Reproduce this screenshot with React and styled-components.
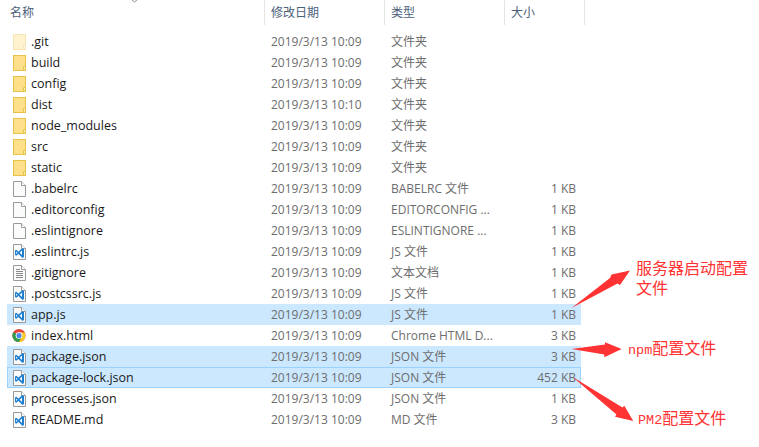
import styled, { createGlobalStyle } from "styled-components";

const GlobalStyle = createGlobalStyle`
  html, body { margin: 0; padding: 0; background: #fff; }
  body { font-family: "Open Sans", "Noto Sans CJK SC", sans-serif; font-size: 12px; }
`;

const Page = styled.div`
  position: relative;
  width: 759px;
  height: 447px;
  overflow: hidden;
  background: #fff;
`;

const Header = styled.div`
  position: relative;
  display: grid;
  grid-template-columns: 265px 120px 120px 80px;
  height: 25px;
  margin-bottom: 6px;
`;

const HeaderCell = styled.div`
  padding-left: ${(p) => p.$pad}px;
  height: 25px;
  line-height: 23px;
  color: #4c607a;
  font-size: 12px;
  font-family: "Noto Sans CJK SC", sans-serif;
  border-right: 1px solid #e5e5e5;
  box-sizing: border-box;
`;

const SortCaret = styled.svg`
  position: absolute;
  left: 130px;
  top: -1px;
`;

const List = styled.div`
  margin-left: 7px;
  width: 574px;
`;

const Row = styled.div`
  display: grid;
  grid-template-columns: 257px 120px 120px 77px;
  height: 21px;
  box-sizing: border-box;
  line-height: 21px;
  background: ${(p) => (p.$selected ? "#cce8ff" : "transparent")};
  box-shadow: ${(p) => (p.$focused ? "inset 0 0 0 1px #99d1ff" : "none")};
`;

const NameCell = styled.div`
  display: flex;
  align-items: center;
  gap: 5px;
  padding-left: 6px;
  color: #1a1a1a;
  font-size: 12.5px;
`;

const IconSlot = styled.span`
  display: flex;
  width: 13px;
  height: 16px;
  align-items: center;
  justify-content: center;
  flex: none;
`;

const MetaCell = styled.div`
  color: #6d6d6d;
  padding-left: 7px;
  font-size: 12px;
  white-space: nowrap;
  font-family: "Open Sans", "Noto Sans CJK SC", sans-serif;
`;

const SizeCell = styled(MetaCell)`
  text-align: right;
  padding: 0 5px 0 0;
`;

const ArrowLayer = styled.svg`
  position: absolute;
  left: 0;
  top: 0;
  pointer-events: none;
`;

const Note = styled.div`
  position: absolute;
  left: ${(p) => p.$x}px;
  top: ${(p) => p.$y}px;
  width: ${(p) => p.$w || 130}px;
  color: #ff3333;
  font-size: 16px;
  line-height: 20px;
  font-family: "Noto Sans CJK SC", sans-serif;
`;

const Latin = styled.span`
  font-family: "Liberation Mono", monospace;
  font-size: 13.5px;
`;

function FolderIcon({ faded }) {
  return (
    <svg width="13" height="16" viewBox="0 0 13 16" opacity={faded ? 0.4 : 1}>
      <rect x="0.5" y="0.5" width="12" height="15" fill="#ffe08a" stroke="#e9c349" />
      <path d="M10.5 15.5V11.5H12.5" fill="#fff3c4" stroke="#e9c349" />
    </svg>
  );
}

function PlainIcon() {
  return (
    <svg width="13" height="16" viewBox="0 0 13 16">
      <path d="M.5.5H8.5L12.5 4.5V15.5H.5Z" fill="#fbfbfb" stroke="#9a9a9a" />
      <path d="M8.5.5V4.5H12.5" fill="#fff" stroke="#9a9a9a" />
    </svg>
  );
}

function TextIcon() {
  return (
    <svg width="13" height="16" viewBox="0 0 13 16">
      <path d="M.5.5H8.5L12.5 4.5V15.5H.5Z" fill="#fbfbfb" stroke="#9a9a9a" />
      <path d="M8.5.5V4.5H12.5" fill="#fff" stroke="#9a9a9a" />
      <path d="M3 4.5H7M3 6.5H10M3 8.5H10M3 10.5H10M3 12.5H10" stroke="#8a8a8a" />
    </svg>
  );
}

function CodeIcon() {
  return (
    <svg width="13" height="16" viewBox="0 0 13 16">
      <path d="M.5.5H8.5L12.5 4.5V15.5H.5Z" fill="#fbfbfb" stroke="#9a9a9a" />
      <path d="M8.5.5V4.5H12.5" fill="#fff" stroke="#9a9a9a" />
      <path d="M9.5 4L5.5 7.5 3.2 5.8 2 6.5V11L3.2 11.7 5.5 10 9.5 14 11 13V5Z" fill="#1f7fd0" />
      <path d="M9 6.5L6.6 8.7 9 11Z" fill="#fbfbfb" />
      <path d="M3.2 7.5V10L4.6 8.7Z" fill="#fbfbfb" />
    </svg>
  );
}

function ChromeIcon() {
  return (
    <svg width="15" height="15" viewBox="0 0 16 16" style={{ marginLeft: -1 }}>
      <circle cx="8" cy="8" r="7.5" fill="#e2463a" />
      <path d="M8 8L1.5 4.2A7.5 7.5 0 0 0 8 15.5L11.8 9Z" fill="#2f9e4a" />
      <path d="M8 4.5H14.6A7.5 7.5 0 0 1 8 15.5L11.5 9Z" fill="#fbcb2f" />
      <circle cx="8" cy="8" r="3.8" fill="#fff" />
      <circle cx="8" cy="8" r="2.9" fill="#4a86e8" />
    </svg>
  );
}

const icons = {
  folder: <FolderIcon />,
  faded: <FolderIcon faded />,
  plain: <PlainIcon />,
  text: <TextIcon />,
  code: <CodeIcon />,
  chrome: <ChromeIcon />,
};

const files = [
  { icon: "faded", name: ".git", type: "文件夹" },
  { icon: "folder", name: "build", type: "文件夹" },
  { icon: "folder", name: "config", type: "文件夹" },
  { icon: "folder", name: "dist", date: "2019/3/13 10:10", type: "文件夹" },
  { icon: "folder", name: "node_modules", type: "文件夹" },
  { icon: "folder", name: "src", type: "文件夹" },
  { icon: "folder", name: "static", type: "文件夹" },
  { icon: "plain", name: ".babelrc", type: "BABELRC 文件", size: "1 KB" },
  { icon: "plain", name: ".editorconfig", type: "EDITORCONFIG ...", size: "1 KB" },
  { icon: "plain", name: ".eslintignore", type: "ESLINTIGNORE ...", size: "1 KB" },
  { icon: "code", name: ".eslintrc.js", type: "JS 文件", size: "1 KB" },
  { icon: "text", name: ".gitignore", type: "文本文档", size: "1 KB" },
  { icon: "code", name: ".postcssrc.js", type: "JS 文件", size: "1 KB" },
  { icon: "code", name: "app.js", type: "JS 文件", size: "1 KB", selected: true },
  { icon: "chrome", name: "index.html", type: "Chrome HTML D...", size: "3 KB" },
  { icon: "code", name: "package.json", type: "JSON 文件", size: "3 KB", selected: true },
  { icon: "code", name: "package-lock.json", type: "JSON 文件", size: "452 KB", selected: true, focused: true },
  { icon: "code", name: "processes.json", type: "JSON 文件", size: "1 KB" },
  { icon: "code", name: "README.md", type: "MD 文件", size: "3 KB" },
];

export default function App() {
  return (
    <Page>
      <GlobalStyle />
      <Header>
        <HeaderCell $pad={10}>名称</HeaderCell>
        <HeaderCell $pad={6}>修改日期</HeaderCell>
        <HeaderCell $pad={6}>类型</HeaderCell>
        <HeaderCell $pad={6}>大小</HeaderCell>
        <SortCaret width="10" height="4" viewBox="0 0 10 4">
          <path d="M1 0L4.5 3 8 0" fill="none" stroke="#8a8a8a" />
        </SortCaret>
      </Header>
      <List>
        {files.map((f) => (
          <Row key={f.name} $selected={f.selected} $focused={f.focused}>
            <NameCell>
              <IconSlot>{icons[f.icon]}</IconSlot>
              {f.name}
            </NameCell>
            <MetaCell>{f.date || "2019/3/13 10:09"}</MetaCell>
            <MetaCell>{f.type}</MetaCell>
            <SizeCell>{f.size}</SizeCell>
          </Row>
        ))}
      </List>
      <ArrowLayer width="759" height="447" viewBox="0 0 759 447">
        <path d="M571.5 308L610 278 611.5 274.5 630 270.5 620 285 617.5 283.5Z" fill="#ff3333" />
        <path d="M571.5 349L605 344.5 605 342.3 621.7 349 604.3 357.3 604.3 354.5Z" fill="#ff3333" />
        <path d="M572.3 376.7L622.5 407.5 624.3 405.7 633.3 421 615 416.7 616.5 414.5Z" fill="#ff3333" />
      </ArrowLayer>
      <Note $x={636} $y={257} $w={115}>服务器启动配置<br />文件</Note>
      <Note $x={628} $y={337}><Latin>npm</Latin>配置文件</Note>
      <Note $x={638} $y={407}><Latin>PM2</Latin>配置文件</Note>
    </Page>
  );
}
